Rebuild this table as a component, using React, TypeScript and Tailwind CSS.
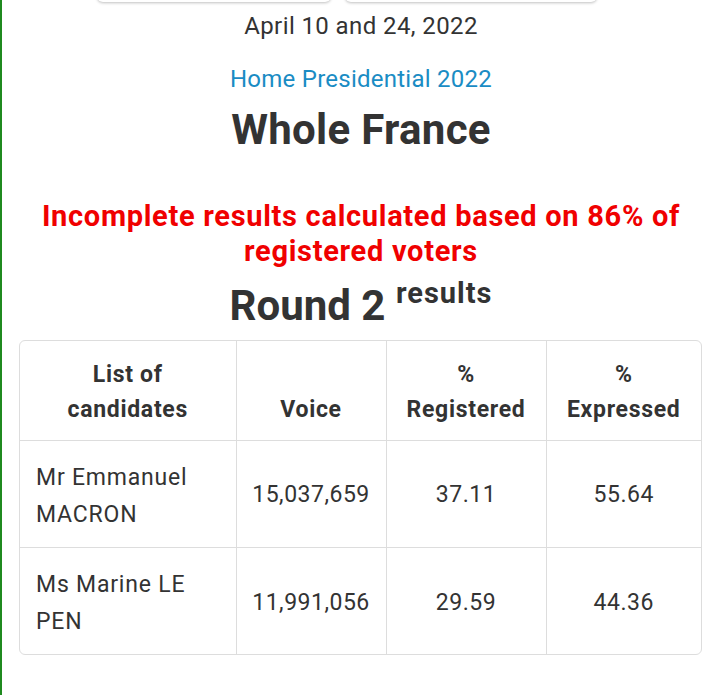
import React from "react";

const rows = [
  { name: ["Mr Emmanuel", "MACRON"], voice: "15,037,659", reg: "37.11", exp: "55.64" },
  { name: ["Ms Marine LE", "PEN"], voice: "11,991,056", reg: "29.59", exp: "44.36" },
];

export default function App() {
  return (
    <div
      className="relative min-h-[695px] w-[720px] overflow-hidden bg-white border-l-2 border-[#1f8a1f] text-[#333333]"
      style={{ fontFamily: "Roboto, 'Liberation Sans', sans-serif" }}
    >
      {/* top buttons cut off */}
      <div className="flex h-[2px] items-end pl-[95px]">
        <div className="h-[20px] w-[234px] -mt-[18px] rounded-b-md bg-white shadow-[0_1px_3px_rgba(0,0,0,0.25)]" />
        <div className="ml-[14px] h-[20px] w-[252px] -mt-[18px] rounded-b-md bg-white shadow-[0_1px_3px_rgba(0,0,0,0.25)]" />
      </div>

      <div className="mt-[9px] text-center text-[24px] leading-[30px] tracking-[0.4px]">April 10 and 24, 2022</div>
      <div className="mt-[23px] text-center text-[24px] leading-[30px] tracking-[0.25px] text-[#1a8cc4]">Home Presidential 2022</div>
      <div className="mt-[12px] text-center text-[42px] font-bold leading-[48px] tracking-[0.3px]">Whole France</div>
      <div className="mt-[45px] px-[20px] text-center text-[29px] font-bold leading-[35px] tracking-[0.7px] text-[#f00000]">
        Incomplete results calculated based on 86% of registered voters
      </div>
      <div className="mt-[13px] text-center text-[42px] font-bold leading-[48px]">
        Round 2 <sup className="-top-[17px] text-[29px] font-bold tracking-[1px]">results</sup>
      </div>

      <div className="ml-[17px] mt-[10px] w-[683px] overflow-hidden rounded-[6px] border border-[#dddddd]">
        <table className="w-full table-fixed border-collapse text-[23px]">
          <colgroup>
            <col className="w-[216px]" />
            <col className="w-[150px]" />
            <col className="w-[160px]" />
            <col />
          </colgroup>
          <thead>
            <tr className="h-[99px]">
              <th className="border-b border-r border-[#dddddd] px-2 pb-[13px] align-bottom text-center font-bold leading-[35px] tracking-[0.7px]">
                List of<br />candidates
              </th>
              <th className="border-b border-r border-[#dddddd] px-2 pb-[13px] align-bottom text-center font-bold leading-[35px] tracking-[0.7px]">
                Voice
              </th>
              <th className="border-b border-r border-[#dddddd] px-1 pb-[13px] align-bottom text-center font-bold leading-[35px] tracking-[0.7px]">
                %<br />Registered
              </th>
              <th className="border-b border-[#dddddd] px-1 pb-[13px] align-bottom text-center font-bold leading-[35px] tracking-[0.7px]">
                %<br />Expressed
              </th>
            </tr>
          </thead>
          <tbody>
            {rows.map((r, i) => (
              <tr key={i} className="h-[107px]">
                <td className={`border-r border-[#dddddd] px-4 pt-[4px] align-middle text-left leading-[37px] tracking-[0.8px] ${i === 0 ? "border-b" : ""}`}>
                  {r.name[0]}
                  <br />
                  {r.name[1]}
                </td>
                <td className={`border-r border-[#dddddd] px-1 pt-[4px] align-middle text-center tracking-[0.5px] ${i === 0 ? "border-b" : ""}`}>{r.voice}</td>
                <td className={`border-r border-[#dddddd] px-1 pt-[4px] align-middle text-center tracking-[0.5px] ${i === 0 ? "border-b" : ""}`}>{r.reg}</td>
                <td className={`border-[#dddddd] px-1 pt-[4px] align-middle text-center tracking-[0.5px] ${i === 0 ? "border-b" : ""}`}>{r.exp}</td>
              </tr>
            ))}
          </tbody>
        </table>
      </div>
    </div>
  );
}
